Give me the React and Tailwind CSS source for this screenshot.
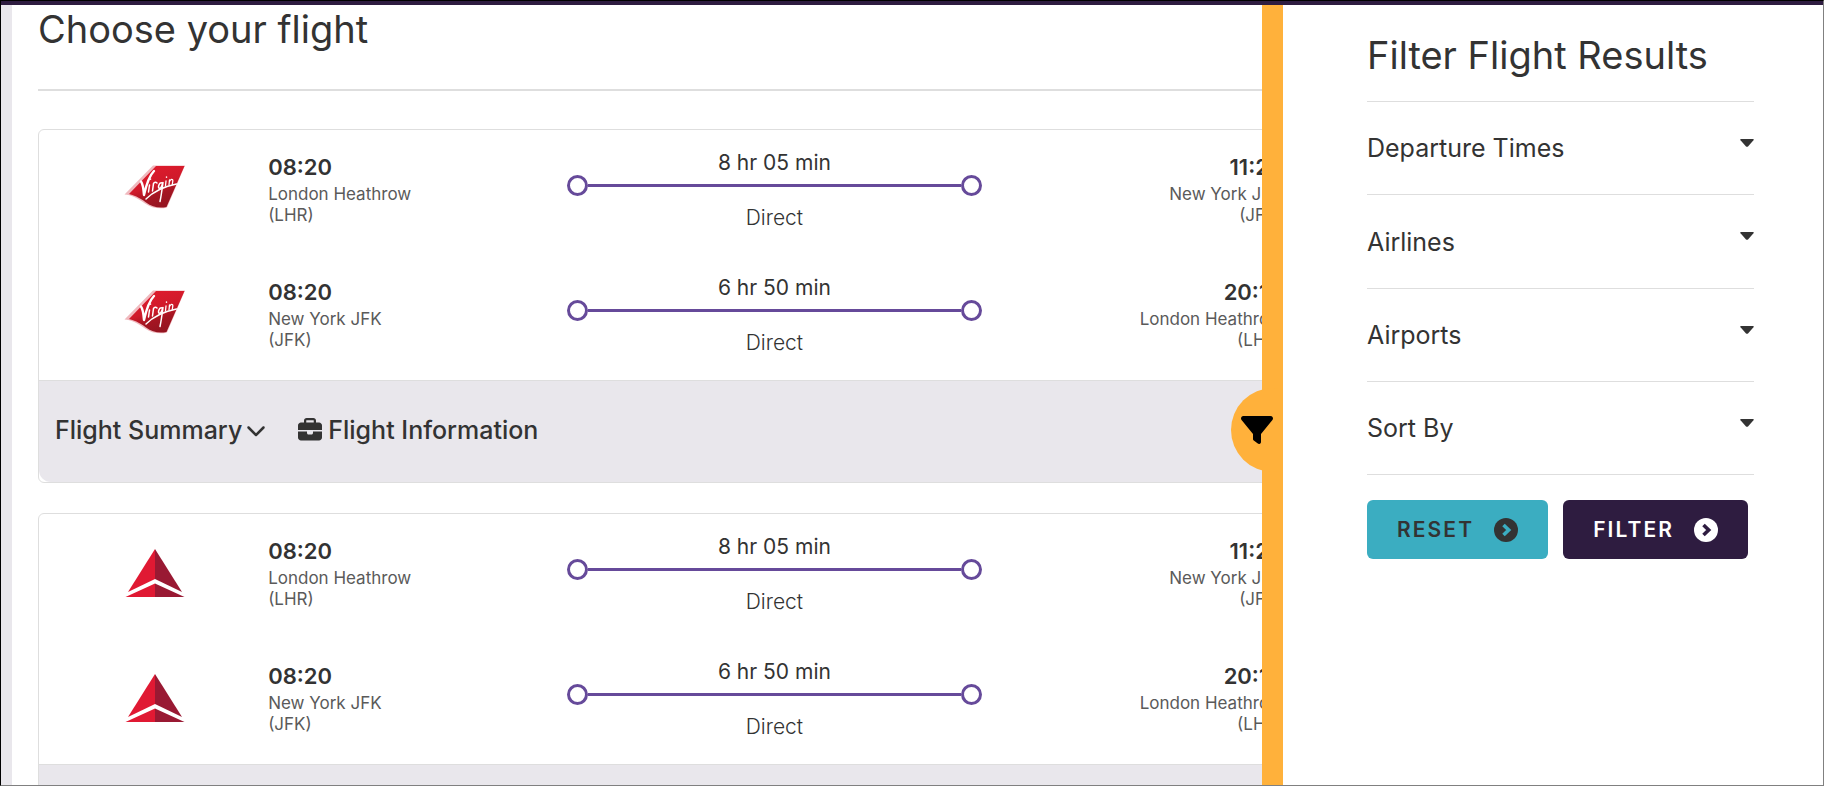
import React from "react";
import { FaBriefcase, FaChevronDown, FaFilter } from "react-icons/fa6";

const outbound = {
  duration: "8 hr 05 min",
  from: { time: "08:20", place: "London Heathrow", code: "(LHR)" },
  to: { time: "11:25", place: "New York JFK", code: "(JFK)" },
};

const inbound = {
  duration: "6 hr 50 min",
  from: { time: "08:20", place: "New York JFK", code: "(JFK)" },
  to: { time: "20:10", place: "London Heathrow", code: "(LHR)" },
};

const filters = ["Departure Times", "Airlines", "Airports", "Sort By"];

function VirginLogo() {
  return (
    <svg className="h-11 w-[62px]" viewBox="0 0 62 44" role="img" aria-label="Virgin Atlantic">
      <defs>
        <linearGradient id="tail" x1="0.3" y1="0" x2="0.75" y2="1">
          <stop offset="0" stopColor="#e01b2d" />
          <stop offset="0.45" stopColor="#cf1a2a" />
          <stop offset="0.65" stopColor="#a51522" />
          <stop offset="1" stopColor="#8f1420" />
        </linearGradient>
      </defs>
      <path d="M29 0.5H61L43 42.5C36 44.5 27 43 21 38.5C13 32.5 7 30 0.5 29.5Z" fill="#f0b9be" />
      <path d="M32 1H60.5L42.5 42C35 43.5 28 42 22 37.5C15 32 9 30 5 29Z" fill="url(#tail)" />
      <g fill="none" stroke="#fff" strokeLinecap="round" strokeLinejoin="round">
        <path d="M17 16.5C19 19 19.500 24 20 30C22 21 25 11 30 6" strokeWidth="2.4" />
        <path d="M25.500 20L24.500 27M28.500 26L29.500 18.500C30.500 17 32 17 33 18M38 18C35 17 33.500 22.500 35.500 23.500C37.500 23.500 38.500 18 39 17.500C38 25 37 32 36 36.500" strokeWidth="1.500" />
        <path d="M42 16L41.500 20.500M45.500 15L45 20M45.200 17C46.500 13.800 49 13.500 48.800 16L48.300 19.500" strokeWidth="1.300" />
        <path d="M22 34C30 26 40 21.500 52.500 19M26.500 14V14.300M42.500 12V12.200" strokeWidth="1.500" />
      </g>
    </svg>
  );
}

function DeltaLogo() {
  return (
    <svg className="h-12 w-[60px]" viewBox="0 0 60 48" role="img" aria-label="Delta Air Lines">
      <path d="M30 0V30L3 43Z" fill="#e01933" />
      <path d="M30 0V30L57 43Z" fill="#991933" />
      <path d="M30 34.500V48H0.500Z" fill="#e01933" />
      <path d="M30 34.500V48H59.500Z" fill="#991933" />
    </svg>
  );
}

function Stop({ stop, alignEnd }) {
  return (
    <div className={alignEnd ? "text-right" : ""}>
      <p className="text-[22px] leading-[26px] font-semibold">{stop.time}</p>
      <p className="mt-1 text-[17px] leading-[21px] text-[#5a5a5a]">
        <span className="block">{stop.place}</span>
        <span className="block">{stop.code}</span>
      </p>
    </div>
  );
}

function Leg({ leg, Logo }) {
  return (
    <div className="grid h-[125px] grid-cols-[229fr_299fr_414fr_301fr_503fr] pt-6">
      <div className="flex justify-center pt-[11px] pl-0.5">
        <Logo />
      </div>
      <Stop stop={leg.from} />
      <div className="text-center text-[21px] leading-6">
        <p className="-mt-[3px]">{leg.duration}</p>
        <div className="flex items-center">
          <span className="size-[21px] rounded-full border-3 border-[#664a9a]" />
          <span className="h-[3px] flex-1 bg-[#664a9a]" />
          <span className="size-[21px] rounded-full border-3 border-[#664a9a]" />
        </div>
        <p className="mt-2.5 font-light">Direct</p>
      </div>
      <Stop stop={leg.to} alignEnd />
    </div>
  );
}

function FlightCard({ Logo }) {
  return (
    <article className="shrink-0 rounded-md border border-[#dedede]">
      <Leg leg={outbound} Logo={Logo} />
      <Leg leg={inbound} Logo={Logo} />
      <div className="flex h-[102px] items-center gap-8 rounded-b-xl border-t border-[#dedede] bg-[#e9e7ec] px-4 pb-1 text-[25px] leading-7 font-medium">
        <button type="button" className="flex items-center gap-1">
          Flight Summary
          <FaChevronDown className="size-5" />
        </button>
        <button type="button" className="flex items-center gap-1.5">
          <FaBriefcase className="size-6" />
          Flight Information
        </button>
      </div>
    </article>
  );
}

function CircleArrow({ arrow }) {
  return (
    <svg className="size-6" viewBox="0 0 24 24" aria-hidden="true">
      <circle cx="12" cy="12" r="12" fill="currentColor" />
      <path d="M9.500 7L14.700 12L9.500 17" fill="none" stroke={arrow} strokeWidth="3.600" />
    </svg>
  );
}

function FilterDrawer() {
  return (
    <aside className="absolute inset-y-0 right-0 w-[561px] border-l-[21px] border-[#ffb13b] bg-white pr-[69px] pl-21">
      <button
        type="button"
        aria-label="Toggle filters"
        className="absolute top-[383px] -left-[52px] flex size-[84px] items-center justify-center rounded-full bg-[#ffb13b] [clip-path:inset(0_32px_0_0)]"
      >
        <FaFilter className="mr-8 size-8 text-black" />
      </button>
      <h2 className="pt-[26px] pb-[22px] text-[38px] leading-[48px]">Filter Flight Results</h2>
      <ul className="grid h-[374px] grid-rows-4 border-t border-[#dedede]">
        {filters.map((name) => (
          <li key={name} className="border-b border-[#dedede]">
            <button type="button" className="flex h-full w-full items-center justify-between pt-0.5 text-[25px]">
              {name}
              <svg className="mb-3 h-2 w-3.5" viewBox="0 0 14 8" aria-hidden="true">
                <path d="M1 0H13Q14.500 0 13.500 1.200L8 7.400Q7 8.300 6 7.400L0.500 1.200Q-0.500 0 1 0Z" fill="currentColor" />
              </svg>
            </button>
          </li>
        ))}
      </ul>
      <div className="mt-[25px] flex gap-[15px] text-[21px] font-semibold tracking-widest">
        <button type="button" className="flex h-[59px] items-center gap-5 rounded-md bg-[#3badc1] px-[30px]">
          RESET
          <CircleArrow arrow="#3badc1" />
        </button>
        <button type="button" className="flex h-[59px] items-center gap-5 rounded-md bg-[#2e1c40] px-[30px] text-white">
          FILTER
          <CircleArrow arrow="#2e1c40" />
        </button>
      </div>
    </aside>
  );
}

export default function App() {
  return (
    <div className="flex h-screen flex-col overflow-hidden border border-t-black border-r-[#808080] border-b-[#808080] border-l-black bg-white font-['Inter','Liberation_Sans',sans-serif] text-[#333]">
      <header className="h-1 shrink-0 bg-[#2e1c40]" />
      <div className="relative min-h-0 flex-1 overflow-hidden">
        <main className="flex h-full flex-col overflow-hidden border-l-[11px] border-[#e9e7ec] pr-9 pl-[26px]">
          <h1 className="shrink-0 border-b-2 border-[#dedede] pb-9 text-[38px] leading-[48px]">Choose your flight</h1>
          <div className="flex flex-col gap-[30px] pt-[38px]">
            <FlightCard Logo={VirginLogo} />
            <FlightCard Logo={DeltaLogo} />
          </div>
        </main>
        <FilterDrawer />
      </div>
    </div>
  );
}
